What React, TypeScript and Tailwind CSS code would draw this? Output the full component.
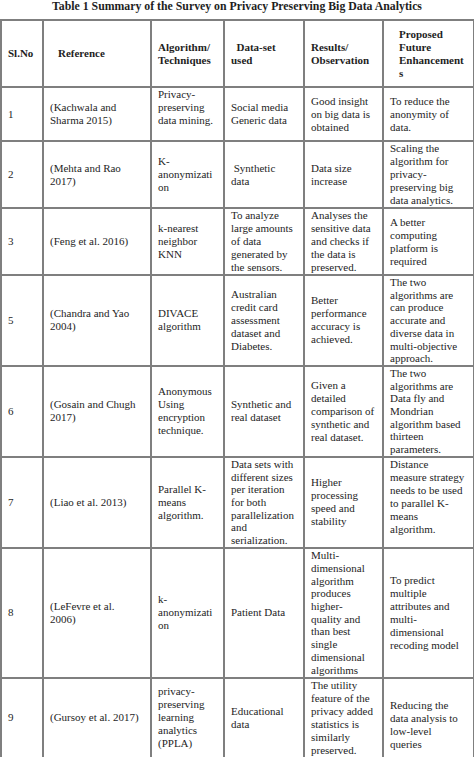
import React from "react";

type Cell = {
  lines: string[];
  pad?: string;
};

type Row = {
  height: string;
  cells: Cell[];
};

const header: Cell[] = [
  { lines: ["Sl.No"] },
  { lines: ["Reference"], pad: "pl-[14px]" },
  { lines: ["Algorithm/", "Techniques"], pad: "pl-[6px]" },
  { lines: ["\u00a0\u00a0Data-set", "used"] },
  { lines: ["Results/", "Observation"] },
  { lines: ["Proposed", "Future", "Enhancement", "s"], pad: "pl-[15px]" },
];

const rows: Row[] = [
  {
    height: "h-[50px]",
    cells: [
      { lines: ["1"] },
      { lines: ["(Kachwala and", "Sharma 2015)"] },
      { lines: ["Privacy-", "preserving", "data mining."], pad: "pb-[13px]" },
      { lines: ["Social media", "Generic data"] },
      { lines: ["Good insight", "on big data is", "obtained"] },
      { lines: ["To reduce the", "anonymity of", "data."] },
    ],
  },
  {
    height: "h-[64px]",
    cells: [
      { lines: ["2"] },
      { lines: ["(Mehta and Rao", "2017)"] },
      { lines: ["K-", "anonymizati", "on"] },
      { lines: ["\u00a0Synthetic", "data"] },
      { lines: ["Data size", "increase"] },
      {
        lines: [
          "Scaling the",
          "algorithm for",
          "privacy-",
          "preserving big",
          "data analytics.",
        ],
      },
    ],
  },
  {
    height: "h-[65px]",
    cells: [
      { lines: ["3"] },
      { lines: ["(Feng et al. 2016)"] },
      { lines: ["k-nearest", "neighbor", "KNN"] },
      {
        lines: [
          "To analyze",
          "large amounts",
          "of data",
          "generated by",
          "the sensors.",
        ],
      },
      {
        lines: [
          "Analyses the",
          "sensitive data",
          "and checks if",
          "the data is",
          "preserved.",
        ],
      },
      { lines: ["A better", "computing", "platform is", "required"] },
    ],
  },
  {
    height: "h-[89px]",
    cells: [
      { lines: ["5"] },
      { lines: ["(Chandra and Yao", "2004)"] },
      { lines: ["DIVACE", "algorithm"] },
      {
        lines: [
          "Australian",
          "credit card",
          "assessment",
          "dataset and",
          "Diabetes.",
        ],
      },
      { lines: ["Better", "performance", "accuracy is", "achieved."] },
      {
        lines: [
          "The two",
          "algorithms are",
          "can produce",
          "accurate and",
          "diverse data in",
          "multi-objective",
          "approach.",
        ],
      },
    ],
  },
  {
    height: "h-[90px]",
    cells: [
      { lines: ["6"] },
      { lines: ["(Gosain and Chugh", "2017)"] },
      { lines: ["Anonymous", "Using", "encryption", "technique."] },
      { lines: ["Synthetic and", "real dataset"] },
      {
        lines: [
          "Given a",
          "detailed",
          "comparison of",
          "synthetic and",
          "real dataset.",
        ],
      },
      {
        lines: [
          "The two",
          "algorithms are",
          "Data fly and",
          "Mondrian",
          "algorithm based",
          "thirteen",
          "parameters.",
        ],
      },
    ],
  },
  {
    height: "h-[89px]",
    cells: [
      { lines: ["7"] },
      { lines: ["(Liao et al. 2013)"] },
      { lines: ["Parallel K-", "means", "algorithm."] },
      {
        lines: [
          "Data sets with",
          "different sizes",
          "per iteration",
          "for both",
          "parallelization",
          "and",
          "serialization.",
        ],
      },
      { lines: ["Higher", "processing", "speed and", "stability"] },
      {
        lines: [
          "Distance",
          "measure strategy",
          "needs to be used",
          "to parallel K-",
          "means",
          "algorithm.",
        ],
        pad: "pb-[10px]",
      },
    ],
  },
  {
    height: "h-[130px]",
    cells: [
      { lines: ["8"] },
      { lines: ["(LeFevre et al.", "2006)"] },
      { lines: ["k-", "anonymizati", "on"] },
      { lines: ["Patient Data"] },
      {
        lines: [
          "Multi-",
          "dimensional",
          "algorithm",
          "produces",
          "higher-",
          "quality and",
          "than best",
          "single",
          "dimensional",
          "algorithms",
        ],
      },
      {
        lines: [
          "To predict",
          "multiple",
          "attributes and",
          "multi-",
          "dimensional",
          "recoding model",
        ],
      },
    ],
  },
  {
    height: "h-[78px]",
    cells: [
      { lines: ["9"] },
      { lines: ["(Gursoy et al. 2017)"] },
      {
        lines: ["privacy-", "preserving", "learning", "analytics", "(PPLA)"],
      },
      { lines: ["Educational", "data"] },
      {
        lines: [
          "The utility",
          "feature of the",
          "privacy added",
          "statistics is",
          "similarly",
          "preserved.",
        ],
      },
      {
        lines: ["Reducing the", "data analysis to", "low-level", "queries"],
        pad: "pt-[14px]",
      },
    ],
  },
];

const serif = "font-[family-name:'Liberation_Serif','Times_New_Roman',serif]";

const cellClass = `${serif} text-[11px] text-[#1e1e1e] border-2 border-[#7f7f7f] align-middle whitespace-nowrap p-0`;

function TableCell({ cell, bold }: { cell: Cell; bold?: boolean }) {
  const padLeft = cell.pad?.startsWith("pl") ? "" : "pl-[6px]";
  // tall cells in the source are set a touch tighter so they fit their rows
  const leading = cell.lines.length >= 7 ? "leading-[12.7px]" : "leading-[13px]";
  return (
    <td className={`${cellClass} ${leading} ${padLeft} ${cell.pad ?? ""}`}>
      {cell.lines.map((line, i) => (
        <div key={i} className={bold ? "font-bold" : "font-normal"}>
          {line}
        </div>
      ))}
    </td>
  );
}

export default function App() {
  return (
    <div className={`w-[474px] h-[757px] overflow-hidden bg-white text-[#1e1e1e] ${serif} text-[11px]`}>
      <div className="h-[19px] text-center text-[11.8px] font-bold leading-[12px]">
        Table 1 Summary of the Survey on Privacy Preserving Big Data Analytics
      </div>
      <table className={`w-[473px] table-fixed border-collapse ${serif}`}>
        <colgroup>
          <col className="w-[42px]" />
          <col className="w-[108px]" />
          <col className="w-[73px]" />
          <col className="w-[80px]" />
          <col className="w-[79px]" />
          <col className="w-[91px]" />
        </colgroup>
        <thead>
          <tr className="h-[67px]">
            {header.map((cell, i) => (
              <TableCell key={i} cell={cell} bold />
            ))}
          </tr>
        </thead>
        <tbody>
          {rows.map((row, r) => (
            <tr key={r} className={row.height}>
              {row.cells.map((cell, i) => (
                <TableCell key={i} cell={cell} />
              ))}
            </tr>
          ))}
        </tbody>
      </table>
    </div>
  );
}
